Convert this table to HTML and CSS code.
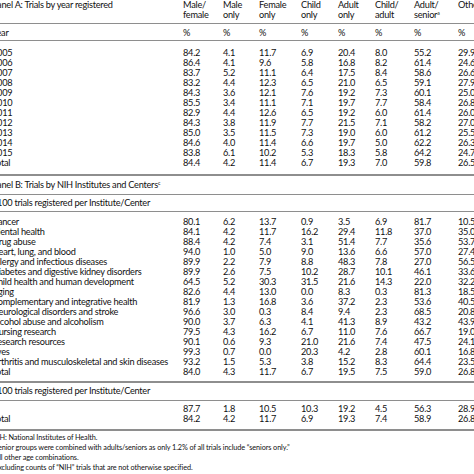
FILE: index.html
```html
<!DOCTYPE html>
<html>
<head>
<meta charset="utf-8">
<link rel="stylesheet" href="styles.css">
</head>
<body>
<div class="page">
<table class="tbl">
<colgroup>
<col class="c-label"><col class="c1"><col class="c2"><col class="c3"><col class="c4"><col class="c5"><col class="c6"><col class="c7"><col class="c8">
</colgroup>
<thead>
<tr class="hdr"><th>Panel A: Trials by year registered</th><th>Male/<br>female</th><th>Male<br>only</th><th>Female<br>only</th><th>Child<br>only</th><th>Adult<br>only</th><th>Child/<br>adult</th><th>Adult/<br>senior<sup>a</sup></th><th>Other<sup>b</sup></th></tr>
<tr class="units"><td>Year</td><td>%</td><td>%</td><td>%</td><td>%</td><td>%</td><td>%</td><td>%</td><td>%</td></tr>
</thead>
<tbody class="panel-a">
<tr class="first"><td>2005</td><td>84.2</td><td>4.1</td><td>11.7</td><td>6.9</td><td>20.4</td><td>8.0</td><td>55.2</td><td>29.9</td></tr>
<tr><td>2006</td><td>86.4</td><td>4.1</td><td>9.6</td><td>5.8</td><td>16.8</td><td>8.2</td><td>61.4</td><td>24.6</td></tr>
<tr><td>2007</td><td>83.7</td><td>5.2</td><td>11.1</td><td>6.4</td><td>17.5</td><td>8.4</td><td>58.6</td><td>26.6</td></tr>
<tr><td>2008</td><td>83.2</td><td>4.4</td><td>12.3</td><td>6.5</td><td>21.0</td><td>6.5</td><td>59.1</td><td>27.9</td></tr>
<tr><td>2009</td><td>84.3</td><td>3.6</td><td>12.1</td><td>7.6</td><td>19.2</td><td>7.3</td><td>60.1</td><td>25.0</td></tr>
<tr><td>2010</td><td>85.5</td><td>3.4</td><td>11.1</td><td>7.1</td><td>19.7</td><td>7.7</td><td>58.4</td><td>26.8</td></tr>
<tr><td>2011</td><td>82.9</td><td>4.4</td><td>12.6</td><td>6.5</td><td>19.2</td><td>6.0</td><td>61.4</td><td>26.0</td></tr>
<tr><td>2012</td><td>84.3</td><td>3.8</td><td>11.9</td><td>7.7</td><td>21.5</td><td>7.1</td><td>58.2</td><td>27.0</td></tr>
<tr><td>2013</td><td>85.0</td><td>3.5</td><td>11.5</td><td>7.3</td><td>19.0</td><td>6.0</td><td>61.2</td><td>25.5</td></tr>
<tr><td>2014</td><td>84.6</td><td>4.0</td><td>11.4</td><td>6.6</td><td>19.7</td><td>5.0</td><td>62.2</td><td>26.3</td></tr>
<tr><td>2015</td><td>83.8</td><td>6.1</td><td>10.2</td><td>5.3</td><td>18.3</td><td>5.8</td><td>64.2</td><td>24.7</td></tr>
<tr class="last thick"><td>Total</td><td>84.4</td><td>4.2</td><td>11.4</td><td>6.7</td><td>19.3</td><td>7.0</td><td>59.8</td><td>26.5</td></tr>
</tbody>
<tbody>
<tr class="panel"><td colspan="9">Panel B: Trials by NIH Institutes and Centers<sup>c</sup></td></tr>
<tr class="group group-hi"><td colspan="9">&ge;100 trials registered per Institute/Center</td></tr>
</tbody>
<tbody class="panel-b">
<tr class="first"><td>Cancer</td><td>80.1</td><td>6.2</td><td>13.7</td><td>0.9</td><td>3.5</td><td>6.9</td><td>81.7</td><td>10.5</td></tr>
<tr><td>Mental health</td><td>84.1</td><td>4.2</td><td>11.7</td><td>16.2</td><td>29.4</td><td>11.8</td><td>37.0</td><td>35.0</td></tr>
<tr><td>Drug abuse</td><td>88.4</td><td>4.2</td><td>7.4</td><td>3.1</td><td>51.4</td><td>7.7</td><td>35.6</td><td>53.7</td></tr>
<tr><td>Heart, lung, and blood</td><td>94.0</td><td>1.0</td><td>5.0</td><td>9.0</td><td>13.6</td><td>6.6</td><td>57.0</td><td>27.4</td></tr>
<tr><td>Allergy and infectious diseases</td><td>89.9</td><td>2.2</td><td>7.9</td><td>8.8</td><td>48.3</td><td>7.8</td><td>27.0</td><td>56.5</td></tr>
<tr><td>Diabetes and digestive kidney disorders</td><td>89.9</td><td>2.6</td><td>7.5</td><td>10.2</td><td>28.7</td><td>10.1</td><td>46.1</td><td>33.6</td></tr>
<tr><td>Child health and human development</td><td>64.5</td><td>5.2</td><td>30.3</td><td>31.5</td><td>21.6</td><td>14.3</td><td>22.0</td><td>32.2</td></tr>
<tr><td>Aging</td><td>82.6</td><td>4.4</td><td>13.0</td><td>0.0</td><td>8.3</td><td>0.3</td><td>81.3</td><td>18.5</td></tr>
<tr><td>Complementary and integrative health</td><td>81.9</td><td>1.3</td><td>16.8</td><td>3.6</td><td>37.2</td><td>2.3</td><td>53.6</td><td>40.5</td></tr>
<tr><td>Neurological disorders and stroke</td><td>96.6</td><td>3.0</td><td>0.3</td><td>8.4</td><td>9.4</td><td>2.3</td><td>68.5</td><td>20.8</td></tr>
<tr><td>Alcohol abuse and alcoholism</td><td>90.0</td><td>3.7</td><td>6.3</td><td>4.1</td><td>41.3</td><td>8.9</td><td>43.2</td><td>43.9</td></tr>
<tr><td>Nursing research</td><td>79.5</td><td>4.3</td><td>16.2</td><td>6.7</td><td>11.0</td><td>7.6</td><td>66.7</td><td>19.0</td></tr>
<tr><td>Research resources</td><td>90.1</td><td>0.6</td><td>9.3</td><td>21.0</td><td>21.6</td><td>7.4</td><td>47.5</td><td>24.1</td></tr>
<tr><td>Eyes</td><td>99.3</td><td>0.7</td><td>0.0</td><td>20.3</td><td>4.2</td><td>2.8</td><td>60.1</td><td>16.8</td></tr>
<tr><td>Arthritis and musculoskeletal and skin diseases</td><td>93.2</td><td>1.5</td><td>5.3</td><td>3.8</td><td>15.2</td><td>8.3</td><td>64.4</td><td>23.5</td></tr>
<tr class="last thick"><td>Total</td><td>84.0</td><td>4.3</td><td>11.7</td><td>6.7</td><td>19.5</td><td>7.5</td><td>59.0</td><td>26.8</td></tr>
</tbody>
<tbody>
<tr class="group group-lo"><td colspan="9">&lt;100 trials registered per Institute/Center</td></tr>
</tbody>
<tbody class="panel-c">
<tr class="first"><td></td><td>87.7</td><td>1.8</td><td>10.5</td><td>10.3</td><td>19.2</td><td>4.5</td><td>56.3</td><td>28.9</td></tr>
<tr class="last thick"><td>Total</td><td>84.2</td><td>4.2</td><td>11.7</td><td>6.9</td><td>19.3</td><td>7.4</td><td>58.9</td><td>26.8</td></tr>
</tbody>
</table>
<div class="notes">
<p>NIH: National Institutes of Health.</p>
<p><sup>a</sup>Senior groups were combined with adults/seniors as only 1.2% of all trials include &ldquo;seniors only.&rdquo;</p>
<p><sup>b</sup>All other age combinations.</p>
<p><sup>c</sup>Excluding counts of &ldquo;NIH&rdquo; trials that are not otherwise specified.</p>
</div>
</div>
</body>
</html>
```
FILE: styles.css
```css
html, body {
  margin: 0;
  padding: 0;
  background: #fff;
}
body {
  width: 474px;
  height: 474px;
  overflow: hidden;
}
.page {
  margin-left: -8px;
  width: 540px;
  font-family: Lato, "Noto Sans", sans-serif;
  font-size: 9.2px;
  letter-spacing: -0.25px;
  color: #111;
}
.tbl {
  border-collapse: separate;
  border-spacing: 0;
  table-layout: fixed;
  width: 524px;
}
.c-label { width: 191px; }
.c1 { width: 40px; }
.c2 { width: 36px; }
.c3 { width: 42px; }
.c4 { width: 37px; }
.c5 { width: 37px; }
.c6 { width: 39px; }
.c7 { width: 44px; }
.c8 { width: 58px; }
.tbl th, .tbl td {
  padding: 0;
  text-align: left;
  font-weight: normal;
  line-height: 10px;
  white-space: nowrap;
  vertical-align: top;
}
sup {
  font-size: 5px;
  line-height: 0;
  vertical-align: 3px;
}
.hdr th {
  padding-bottom: 3px;
  border-bottom: 1px solid #8e8e8e;
}
.units td {
  padding-top: 4px;
  padding-bottom: 2px;
  border-bottom: 1px solid #8e8e8e;
}
.panel-a .first td { padding-top: 7px; }
.panel-a .last td { padding-bottom: 6px; }
.panel-b .first td { padding-top: 5px; }
.panel-b .last td { padding-bottom: 4px; }
.panel-c .first td { padding-top: 3px; }
.panel-c .last td { padding-bottom: 5px; }
.thick td { border-bottom: 2px solid #8e8e8e; }
.panel td {
  padding-top: 4px;
  padding-bottom: 4px;
  border-bottom: 1px solid #8e8e8e;
}
.group-hi td {
  padding-top: 3px;
  padding-bottom: 3px;
  border-bottom: 1px solid #8e8e8e;
}
.group-lo td {
  padding-top: 3px;
  padding-bottom: 4px;
  border-bottom: 1px solid #8e8e8e;
}
.notes {
  padding-top: 2px;
  font-size: 7.3px;
  letter-spacing: -0.1px;
}
.notes p {
  margin: 0;
  line-height: 10px;
  white-space: nowrap;
}
.notes sup {
  font-size: 4.5px;
}
```
